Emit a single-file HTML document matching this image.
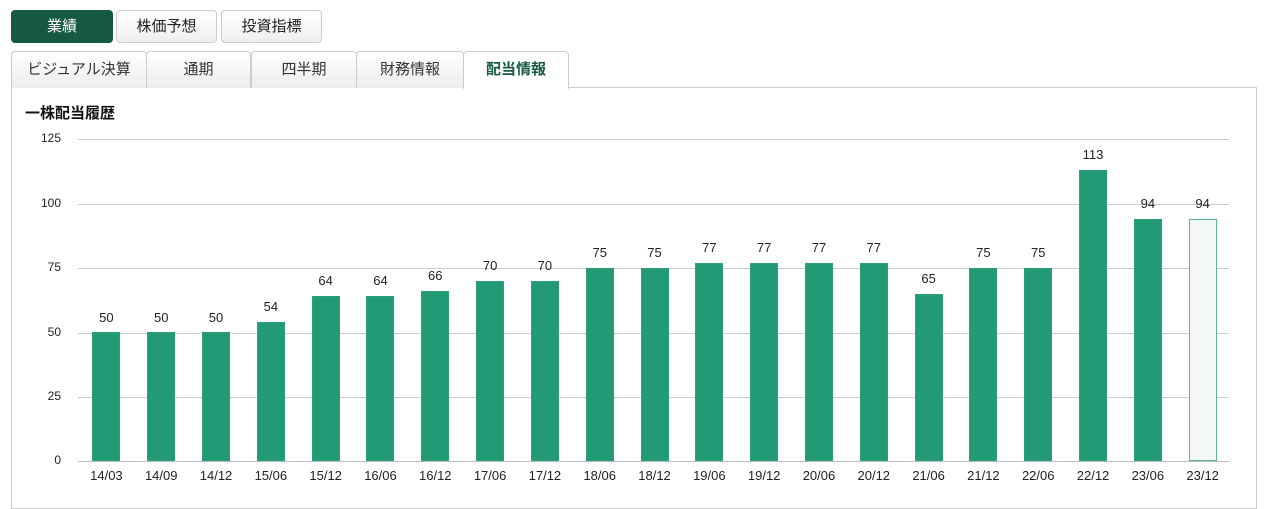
<!DOCTYPE html><html><head><meta charset="utf-8"><style>
body{margin:0;width:1280px;height:499px;background:#fff;font-family:"Liberation Sans","Noto Sans CJK JP",sans-serif;position:relative;overflow:hidden;color:#333}
.btn{position:absolute;top:10px;height:31px;border:1px solid #ccc;border-radius:4px;background:linear-gradient(#fff,#eee);font-size:15px;line-height:31px;text-align:center;color:#222}
.tab{position:absolute;top:51px;height:36px;border:1px solid #ccc;border-bottom:none;border-radius:4px 4px 0 0;background:linear-gradient(#fff,#ececec);font-size:15px;line-height:36px;text-align:center;color:#333}
.panel{position:absolute;left:11px;top:87px;width:1244px;height:420px;border:1px solid #ccc}
.g{position:absolute;left:78px;width:1151px;height:1px;background:#ccc}
.yl{position:absolute;left:20px;width:41px;text-align:right;font-size:12px;color:#222}
.cols{position:absolute;left:79px;top:0;height:461px;width:1151px;display:flex}
.c{flex:1;position:relative}
.b{position:absolute;bottom:0;left:50%;margin-left:-14px;width:28px;background:#239a76;box-sizing:border-box;border:1px solid #2aa07c}
.v{position:absolute;left:0;right:0;text-align:center;font-size:13px;color:#222}
.x{position:absolute;top:468px;left:-5px;right:-5px;text-align:center;font-size:13px;color:#222}
</style></head><body>
<div class="btn" style="left:11px;width:100px;background:#155943;border-color:#155943;color:#fff">業績</div>
<div class="btn" style="left:116px;width:99px">株価予想</div>
<div class="btn" style="left:221px;width:99px">投資指標</div>
<div class="panel"></div>
<div class="tab" style="left:11px;width:134px">ビジュアル決算</div>
<div class="tab" style="left:146px;width:103px">通期</div>
<div class="tab" style="left:251px;width:104px">四半期</div>
<div class="tab" style="left:356px;width:106px">財務情報</div>
<div class="tab" style="left:463px;width:104px;background:#fff;height:37px;color:#155943;font-weight:bold">配当情報</div>
<div style="position:absolute;left:25px;top:102px;font-size:15px;font-weight:bold;color:#111">一株配当履歴</div>
<div class="g" style="top:139px"></div><div class="g" style="top:204px"></div><div class="g" style="top:268px"></div><div class="g" style="top:333px"></div><div class="g" style="top:397px"></div><div class="g" style="top:461px;background:#bbb"></div>
<div class="yl" style="top:131px">125</div><div class="yl" style="top:196px">100</div><div class="yl" style="top:260px">75</div><div class="yl" style="top:325px">50</div><div class="yl" style="top:389px">25</div><div class="yl" style="top:453px">0</div>
<div class="cols">
<div class="c"><div class="b" style="height:129px"></div><div class="v" style="top:310px">50</div><div class="x">14/03</div></div>
<div class="c"><div class="b" style="height:129px"></div><div class="v" style="top:310px">50</div><div class="x">14/09</div></div>
<div class="c"><div class="b" style="height:129px"></div><div class="v" style="top:310px">50</div><div class="x">14/12</div></div>
<div class="c"><div class="b" style="height:139px"></div><div class="v" style="top:299px">54</div><div class="x">15/06</div></div>
<div class="c"><div class="b" style="height:165px"></div><div class="v" style="top:273px">64</div><div class="x">15/12</div></div>
<div class="c"><div class="b" style="height:165px"></div><div class="v" style="top:273px">64</div><div class="x">16/06</div></div>
<div class="c"><div class="b" style="height:170px"></div><div class="v" style="top:268px">66</div><div class="x">16/12</div></div>
<div class="c"><div class="b" style="height:180px"></div><div class="v" style="top:258px">70</div><div class="x">17/06</div></div>
<div class="c"><div class="b" style="height:180px"></div><div class="v" style="top:258px">70</div><div class="x">17/12</div></div>
<div class="c"><div class="b" style="height:193px"></div><div class="v" style="top:245px">75</div><div class="x">18/06</div></div>
<div class="c"><div class="b" style="height:193px"></div><div class="v" style="top:245px">75</div><div class="x">18/12</div></div>
<div class="c"><div class="b" style="height:198px"></div><div class="v" style="top:240px">77</div><div class="x">19/06</div></div>
<div class="c"><div class="b" style="height:198px"></div><div class="v" style="top:240px">77</div><div class="x">19/12</div></div>
<div class="c"><div class="b" style="height:198px"></div><div class="v" style="top:240px">77</div><div class="x">20/06</div></div>
<div class="c"><div class="b" style="height:198px"></div><div class="v" style="top:240px">77</div><div class="x">20/12</div></div>
<div class="c"><div class="b" style="height:167px"></div><div class="v" style="top:271px">65</div><div class="x">21/06</div></div>
<div class="c"><div class="b" style="height:193px"></div><div class="v" style="top:245px">75</div><div class="x">21/12</div></div>
<div class="c"><div class="b" style="height:193px"></div><div class="v" style="top:245px">75</div><div class="x">22/06</div></div>
<div class="c"><div class="b" style="height:291px"></div><div class="v" style="top:147px">113</div><div class="x">22/12</div></div>
<div class="c"><div class="b" style="height:242px"></div><div class="v" style="top:196px">94</div><div class="x">23/06</div></div>
<div class="c"><div class="b" style="height:242px;background:#f3f8f6;border-color:#5bb897"></div><div class="v" style="top:196px">94</div><div class="x">23/12</div></div>
</div>
</body></html>
